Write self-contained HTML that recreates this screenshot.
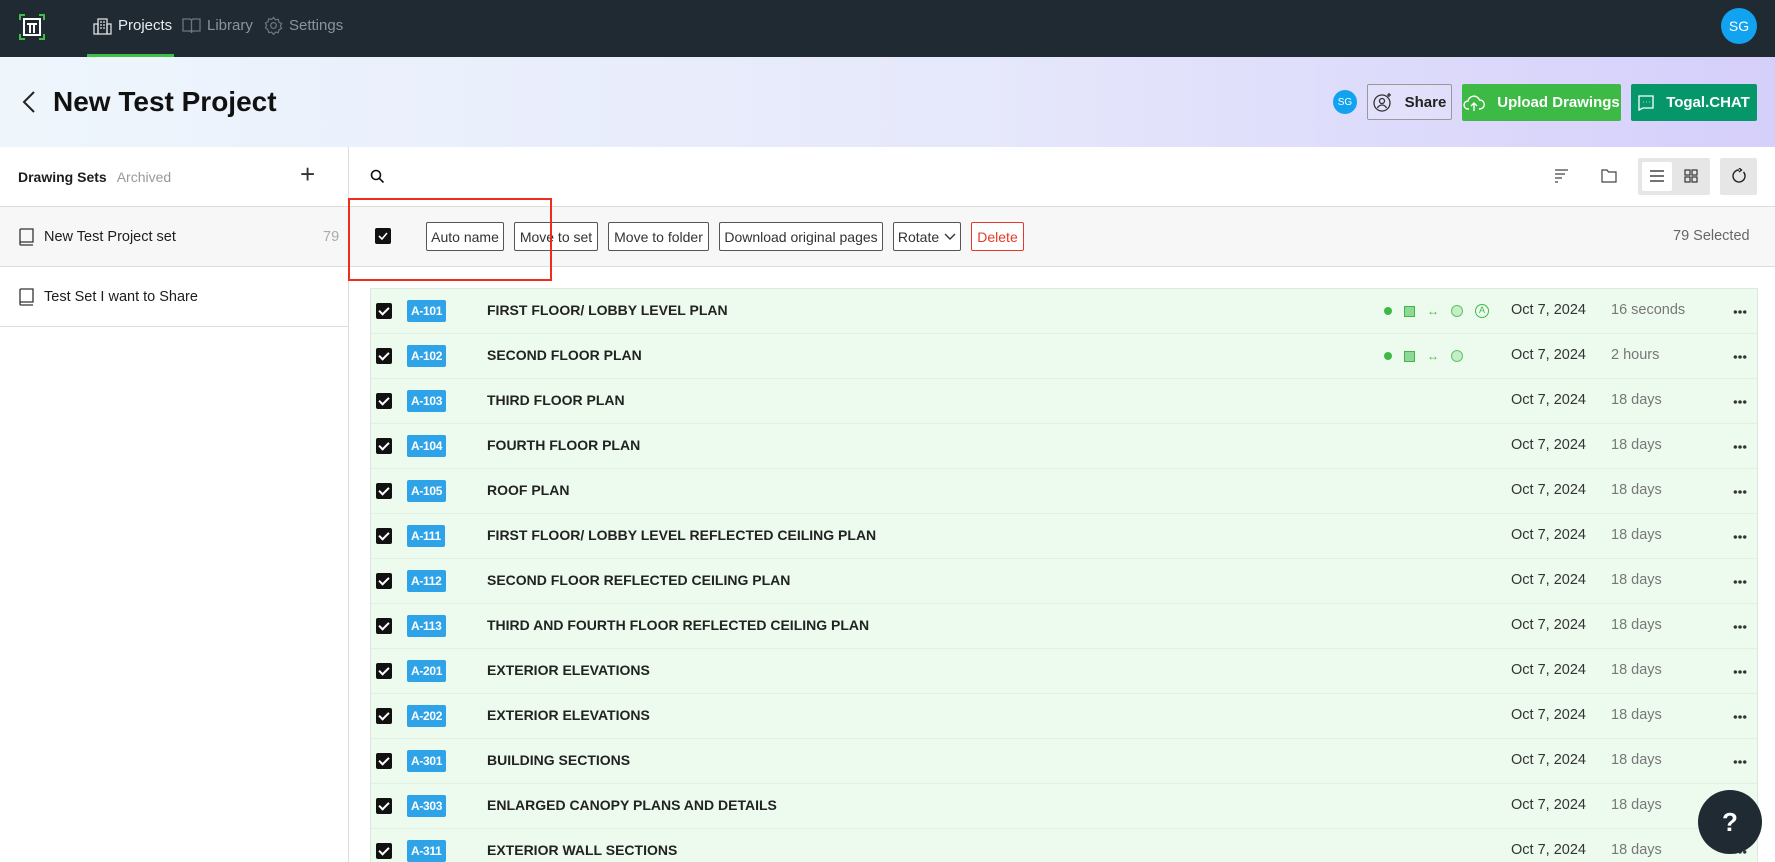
<!DOCTYPE html>
<html><head><meta charset="utf-8"><style>
*{box-sizing:border-box;margin:0;padding:0}
html,body{width:1775px;height:862px;overflow:hidden}
body{font-family:"Liberation Sans",sans-serif;background:#fff;position:relative;color:#1d1d1d}
.abs{position:absolute}
.top{left:0;top:0;width:1775px;height:57px;background:#1f2a33}
.nav{color:#8a949c;font-size:15px;top:17px}
.hdr{left:0;top:57px;width:1775px;height:90px;background:linear-gradient(90deg,#eef6fc 0%,#e6e8fb 55%,#d5cffb 100%)}
.btn{border-radius:2px;font-size:15px;font-weight:bold;display:flex;align-items:center;justify-content:center;gap:12px}
.side{left:0;top:147px;width:349px;height:715px;border-right:1px solid #ddd;background:#fff}
.srow{position:absolute;left:0;width:348px;height:60px;border-bottom:1px solid #ddd;display:flex;align-items:center;padding-left:18px;font-size:14.5px}
.ab{position:absolute;top:222px;height:29px;border:1px solid #555;border-radius:2px;background:#fff;font-size:14px;color:#333;display:flex;align-items:center;justify-content:center}
.list{left:370px;top:288px;width:1388px;height:574px;background:#edfbee;border:1px solid #dfe8df;border-bottom:none;overflow:hidden}
.row{position:absolute;left:0;width:1386px;height:45px;border-bottom:1px solid #e2f0e2}
.cb{position:absolute;left:5px;top:14px;width:16px;height:16px;background:#111;border-radius:2px}
.cb:after{content:"";position:absolute;left:5px;top:2px;width:4px;height:8px;border:solid #fff;border-width:0 2px 2px 0;transform:rotate(45deg)}
.tag{position:absolute;left:36px;top:11px;height:22px;padding:0 4px;background:#2ea3e8;color:#fff;font-size:12px;font-weight:bold;border-radius:2px;line-height:22px;letter-spacing:-0.3px}
.tt{position:absolute;left:116px;top:13px;font-size:14px;font-weight:bold;color:#222}
.dt{position:absolute;left:1140px;top:13px;font-size:14.5px;color:#333}
.tm{position:absolute;left:1240px;top:13px;font-size:14.5px;color:#777}
.dots{position:absolute;left:1362px;top:21px;width:14px;height:4px;background:radial-gradient(circle,#333 1.6px,transparent 1.9px) 0 0/4.7px 4px repeat-x}
.ic{position:absolute;left:1013px;top:15px;display:flex;gap:12px;align-items:center}
</style></head><body>
<div class="abs top"></div>
<svg class="abs" style="left:19px;top:14px" width="26" height="26" viewBox="0 0 26 26"><path d="M1 6V1h5M20 1h5v5M25 20v5h-5M6 25H1v-5" stroke="#3fbf4a" stroke-width="2" fill="none"/><rect x="5" y="5" width="16" height="16" fill="none" stroke="#fff" stroke-width="2"/><path d="M8 10h10M11 10v9M15 10v9" stroke="#fff" stroke-width="2"/></svg>
<svg class="abs" style="left:93px;top:17px" width="19" height="18" viewBox="0 0 19 18" fill="none" stroke="#ddd" stroke-width="1.3"><rect x="5" y="2" width="9" height="15"/><rect x="1" y="7" width="4" height="10"/><rect x="14" y="7" width="4" height="10"/><path d="M7 5h2M10 5h2M7 8h2M10 8h2M7 11h2M10 11h2"/></svg>
<div class="abs nav" style="left:118px;color:#e8ecef">Projects</div>
<div class="abs" style="left:87px;top:54px;width:87px;height:3px;background:#3fbf4a"></div>
<svg class="abs" style="left:182px;top:17px" width="19" height="17" viewBox="0 0 19 17" fill="none" stroke="#6b7680" stroke-width="1.3"><path d="M1 2h6a2 2 0 0 1 2.5 2v12a2 2 0 0 0-2.5-2H1zM18 2h-6a2 2 0 0 0-2.5 2v12a2 2 0 0 1 2.5-2h6z"/></svg>
<div class="abs nav" style="left:207px">Library</div>
<svg class="abs" style="left:264px;top:16px" width="19" height="19" viewBox="0 0 20 20" fill="none" stroke="#6b7680" stroke-width="1.3"><circle cx="10" cy="10" r="3"/><path d="M10 1.5l2 2.5 3-.5.8 3 2.7 1.5-1.3 2.5 1.3 2.5-2.7 1.5-.8 3-3-.5-2 2.5-2-2.5-3 .5-.8-3L1.5 12.5 2.8 10 1.5 7.5l2.7-1.5.8-3 3 .5z"/></svg>
<div class="abs nav" style="left:289px">Settings</div>
<div class="abs" style="left:1721px;top:8px;width:36px;height:36px;border-radius:50%;background:#11a3f0;color:#fff;font-size:14px;display:flex;align-items:center;justify-content:center">SG</div>

<div class="abs hdr"></div>
<svg class="abs" style="left:22px;top:90px" width="14" height="24" viewBox="0 0 14 24"><path d="M12 2L2 12l10 10" stroke="#222" stroke-width="2" fill="none"/></svg>
<div class="abs" style="left:53px;top:86px;font-size:28px;font-weight:bold;color:#111">New Test Project</div>
<div class="abs" style="left:1333px;top:90px;width:24px;height:24px;border-radius:50%;background:#11a3f0;color:#fff;font-size:10px;display:flex;align-items:center;justify-content:center">SG</div>
<div class="abs btn" style="left:1367px;top:84px;width:85px;height:36px;border:1px solid #999;color:#222;background:rgba(255,255,255,.15)"><svg width="20" height="20" viewBox="0 0 20 20" fill="none" stroke="#333" stroke-width="1.3"><circle cx="9" cy="11" r="8"/><circle cx="9" cy="9" r="2.5"/><path d="M4.5 16c1-2 2.5-3 4.5-3s3.5 1 4.5 3M16 1v4M14 3h4"/></svg>Share</div>
<div class="abs btn" style="left:1462px;top:84px;width:159px;height:37px;background:#3dba45;color:#fff"><svg width="22" height="18" viewBox="0 0 22 18" fill="none" stroke="#fff" stroke-width="1.4"><path d="M6 15H5a4 4 0 0 1 0-8 6 6 0 0 1 11.5-1A4.5 4.5 0 0 1 17 15h-1M11 9v8M8 12l3-3 3 3"/></svg>Upload Drawings</div>
<div class="abs btn" style="left:1631px;top:84px;width:126px;height:37px;background:#05976a;color:#fff"><svg width="16" height="16" viewBox="0 0 16 16" fill="none" stroke="#fff" stroke-width="1.3"><path d="M1 1h14v12H5l-4 2z"/><path d="M5 7h.5M8 7h.5M11 7h.5"/></svg>Togal.CHAT</div>

<div class="abs side">
<div class="srow" style="top:0;background:#fff;font-weight:bold;font-size:14px">Drawing Sets<span style="font-weight:normal;color:#999;margin-left:10px">Archived</span><span style="position:absolute;left:300px;top:12px;font-size:26px;font-weight:normal;color:#333">+</span></div>
<div class="srow" style="top:60px;background:#f7f7f7"><svg width="16" height="18" viewBox="0 0 16 18" fill="none" stroke="#333" stroke-width="1.3" style="margin-right:10px"><path d="M2 2a1 1 0 0 1 1-1h12v13H3a1 1 0 0 0-1 1v1a1 1 0 0 0 1 1h12M2 2v13M3 14h12"/></svg>New Test Project set<span style="position:absolute;left:323px;color:#aaa">79</span></div>
<div class="srow" style="top:120px"><svg width="16" height="18" viewBox="0 0 16 18" fill="none" stroke="#333" stroke-width="1.3" style="margin-right:10px"><path d="M2 2a1 1 0 0 1 1-1h12v13H3a1 1 0 0 0-1 1v1a1 1 0 0 0 1 1h12M2 2v13M3 14h12"/></svg>Test Set I want to Share</div>
</div>

<svg class="abs" style="left:370px;top:169px" width="15" height="15" viewBox="0 0 15 15" fill="none" stroke="#111" stroke-width="1.6"><circle cx="6" cy="6" r="4.5"/><path d="M9.5 9.5l4 4"/></svg>
<svg class="abs" style="left:1554px;top:169px" width="16" height="14" viewBox="0 0 16 14" stroke="#444" stroke-width="1.2"><path d="M1 1h13M1 5h10M1 9h7M1 13h3"/></svg>
<svg class="abs" style="left:1601px;top:169px" width="16" height="14" viewBox="0 0 16 14" fill="none" stroke="#444" stroke-width="1.2"><path d="M1 1h5l1.5 2H15v10H1z"/></svg>
<div class="abs" style="left:1638px;top:158px;width:72px;height:37px;background:#e6e6e6;border-radius:2px"></div>
<div class="abs" style="left:1642px;top:162px;width:30px;height:29px;background:#fff;border-radius:2px"></div>
<svg class="abs" style="left:1650px;top:170px" width="14" height="12" viewBox="0 0 14 12" stroke="#222" stroke-width="1.3"><path d="M0 1h14M0 6h14M0 11h14"/></svg>
<svg class="abs" style="left:1684px;top:169px" width="14" height="14" viewBox="0 0 14 14" fill="none" stroke="#333" stroke-width="1.2"><rect x="1" y="1" width="5" height="5"/><rect x="8" y="1" width="5" height="5"/><rect x="1" y="8" width="5" height="5"/><rect x="8" y="8" width="5" height="5"/></svg>
<div class="abs" style="left:1720px;top:158px;width:37px;height:37px;background:#e6e6e6;border-radius:2px"></div>
<svg class="abs" style="left:1731px;top:168px" width="16" height="16" viewBox="0 0 16 16" fill="none" stroke="#222" stroke-width="1.4"><path d="M12.5 4A6 6 0 1 1 8 2M8 0l2.5 2L8 4"/></svg>

<div class="abs" style="left:349px;top:206px;width:1426px;height:61px;background:#f7f7f7;border-top:1px solid #ddd;border-bottom:1px solid #ddd"></div>
<div class="abs" style="left:375px;top:228px;width:16px;height:16px;background:#111;border-radius:2px"></div>
<svg class="abs" style="left:378px;top:231px" width="10" height="10" viewBox="0 0 10 10"><path d="M1 5l3 3 5-6" stroke="#fff" stroke-width="1.6" fill="none"/></svg>
<div class="ab" style="left:426px;width:78px">Auto name</div>
<div class="ab" style="left:514px;width:84px">Move to set</div>
<div class="ab" style="left:608px;width:101px">Move to folder</div>
<div class="ab" style="left:719px;width:164px">Download original pages</div>
<div class="ab" style="left:893px;width:68px">Rotate <svg width="12" height="8" viewBox="0 0 12 8" style="margin-left:5px"><path d="M1 1l5 5 5-5" stroke="#333" stroke-width="1.4" fill="none"/></svg></div>
<div class="ab" style="left:971px;width:53px;border-color:#e53a2a;color:#e53a2a">Delete</div>
<div class="abs" style="left:1673px;top:228px;font-size:14.5px;color:#666">79 Selected</div>
<div class="abs" style="left:348px;top:198px;width:204px;height:83px;border:2.5px solid #f02d1a"></div>

<div class="abs list">
<div class="row" style="top:0"><div class="cb"></div><div class="tag">A-101</div><div class="tt">FIRST FLOOR/ LOBBY LEVEL PLAN</div>
<div class="ic"><span style="width:8px;height:8px;border-radius:50%;background:#3dba45"></span><span style="width:11px;height:11px;background:#8fd895;border:1px solid #3dba45"></span><span style="color:#3dba45;font-size:12px;font-weight:bold">↔</span><span style="width:12px;height:12px;border-radius:50%;background:#c5eec8;border:1.5px solid #5cc465"></span><span style="width:14px;height:14px;border-radius:50%;border:1.5px solid #3dba45;color:#3dba45;font-size:9px;text-align:center;line-height:11px">A</span></div>
<div class="dt">Oct 7, 2024</div><div class="tm">16 seconds</div><div class="dots"></div></div>
<div class="row" style="top:45px"><div class="cb"></div><div class="tag">A-102</div><div class="tt">SECOND FLOOR PLAN</div>
<div class="ic"><span style="width:8px;height:8px;border-radius:50%;background:#3dba45"></span><span style="width:11px;height:11px;background:#8fd895;border:1px solid #3dba45"></span><span style="color:#3dba45;font-size:12px;font-weight:bold">↔</span><span style="width:12px;height:12px;border-radius:50%;background:#c5eec8;border:1.5px solid #5cc465"></span></div>
<div class="dt">Oct 7, 2024</div><div class="tm">2 hours</div><div class="dots"></div></div>
<div class="row" style="top:90px"><div class="cb"></div><div class="tag">A-103</div><div class="tt">THIRD FLOOR PLAN</div><div class="dt">Oct 7, 2024</div><div class="tm">18 days</div><div class="dots"></div></div>
<div class="row" style="top:135px"><div class="cb"></div><div class="tag">A-104</div><div class="tt">FOURTH FLOOR PLAN</div><div class="dt">Oct 7, 2024</div><div class="tm">18 days</div><div class="dots"></div></div>
<div class="row" style="top:180px"><div class="cb"></div><div class="tag">A-105</div><div class="tt">ROOF PLAN</div><div class="dt">Oct 7, 2024</div><div class="tm">18 days</div><div class="dots"></div></div>
<div class="row" style="top:225px"><div class="cb"></div><div class="tag">A-111</div><div class="tt">FIRST FLOOR/ LOBBY LEVEL REFLECTED CEILING PLAN</div><div class="dt">Oct 7, 2024</div><div class="tm">18 days</div><div class="dots"></div></div>
<div class="row" style="top:270px"><div class="cb"></div><div class="tag">A-112</div><div class="tt">SECOND FLOOR REFLECTED CEILING PLAN</div><div class="dt">Oct 7, 2024</div><div class="tm">18 days</div><div class="dots"></div></div>
<div class="row" style="top:315px"><div class="cb"></div><div class="tag">A-113</div><div class="tt">THIRD AND FOURTH FLOOR REFLECTED CEILING PLAN</div><div class="dt">Oct 7, 2024</div><div class="tm">18 days</div><div class="dots"></div></div>
<div class="row" style="top:360px"><div class="cb"></div><div class="tag">A-201</div><div class="tt">EXTERIOR ELEVATIONS</div><div class="dt">Oct 7, 2024</div><div class="tm">18 days</div><div class="dots"></div></div>
<div class="row" style="top:405px"><div class="cb"></div><div class="tag">A-202</div><div class="tt">EXTERIOR ELEVATIONS</div><div class="dt">Oct 7, 2024</div><div class="tm">18 days</div><div class="dots"></div></div>
<div class="row" style="top:450px"><div class="cb"></div><div class="tag">A-301</div><div class="tt">BUILDING SECTIONS</div><div class="dt">Oct 7, 2024</div><div class="tm">18 days</div><div class="dots"></div></div>
<div class="row" style="top:495px"><div class="cb"></div><div class="tag">A-303</div><div class="tt">ENLARGED CANOPY PLANS AND DETAILS</div><div class="dt">Oct 7, 2024</div><div class="tm">18 days</div><div class="dots"></div></div>
<div class="row" style="top:540px"><div class="cb"></div><div class="tag">A-311</div><div class="tt">EXTERIOR WALL SECTIONS</div><div class="dt">Oct 7, 2024</div><div class="tm">18 days</div><div class="dots"></div></div>
</div>
<div class="abs" style="left:1698px;top:790px;width:64px;height:64px;border-radius:50%;background:#1f2a33;color:#fff;font-size:26px;font-weight:bold;display:flex;align-items:center;justify-content:center">?</div>
</body></html>
